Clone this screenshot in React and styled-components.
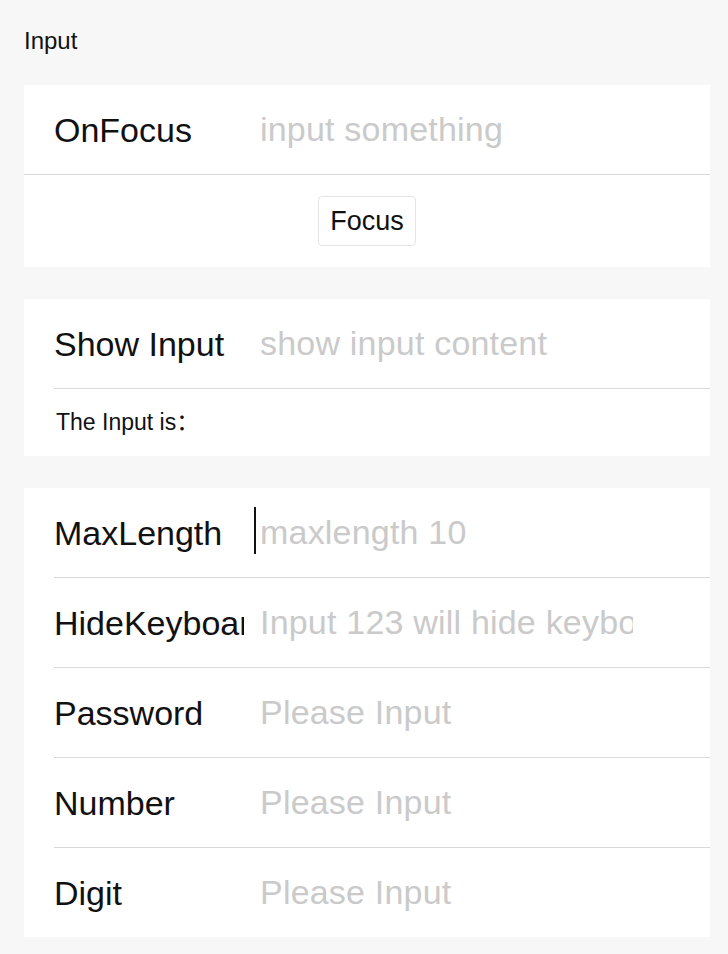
import React from "react";
import styled, { createGlobalStyle } from "styled-components";

const GlobalStyle = createGlobalStyle`
  html, body {
    margin: 0;
    padding: 0;
    background: #f7f7f7;
    font-family: "Liberation Sans", "Noto Sans CJK SC", Arial, sans-serif;
    color: #111;
  }
  * { box-sizing: border-box; }
`;

const Page = styled.div`
  padding: 29px 18px 18px 24px;
`;

const Title = styled.div`
  font-size: 24px;
  line-height: 24px;
  margin-bottom: 32px;
  color: #111;
`;

const Panel = styled.div`
  background: #fff;
  margin-bottom: 32px;
`;

const FieldRow = styled.div`
  display: flex;
  align-items: center;
  height: ${(p) => (p.$last ? "89px" : "90px")};
  border-bottom: ${(p) => (p.$last ? "none" : "1px solid #d9d9d9")};
  margin-left: ${(p) => (p.$inset ? "30px" : "0")};
  padding-left: ${(p) => (p.$inset ? "0" : "30px")};
  padding-right: 77px;
`;

const Label = styled.div`
  flex: 0 0 190px;
  width: 190px;
  margin-right: 16px;
  font-size: 34px;
  line-height: 40px;
  white-space: nowrap;
  overflow: hidden;
  color: #111;
`;

const InputWrap = styled.div`
  position: relative;
  flex: 1;
  min-width: 0;
  display: flex;
  align-items: center;
`;

const TextInput = styled.input`
  flex: 1;
  min-width: 0;
  width: 100%;
  height: 40px;
  border: none;
  outline: none;
  padding: 0;
  margin: 0;
  background: transparent;
  font-family: inherit;
  font-size: 34px;
  letter-spacing: 0.2px;
  color: #111;
  &::placeholder {
    color: #cacaca;
    opacity: 1;
  }
`;

const Caret = styled.span`
  position: absolute;
  left: -6px;
  top: calc(50% - 26px);
  width: 2px;
  height: 47px;
  background: #111;
`;

const ButtonRow = styled.div`
  display: flex;
  justify-content: center;
  padding: 21px 0;
`;

const FocusButton = styled.button`
  height: 50px;
  padding: 0 11px;
  border: 1px solid #e4e4e4;
  border-radius: 4px;
  background: #fff;
  font-family: inherit;
  font-size: 27px;
  color: #111;
  cursor: pointer;
`;

const ResultRow = styled.div`
  display: flex;
  align-items: center;
  height: 67px;
  margin-left: 30px;
  padding-left: 2px;
  padding-bottom: 1px;
  font-size: 23px;
  line-height: 28px;
  color: #111;
`;

const Field = ({ label, placeholder, inset, last, type = "text", caret, inputMode }) => (
  <FieldRow $inset={inset} $last={last}>
    <Label>{label}</Label>
    <InputWrap>
      {caret && <Caret />}
      <TextInput type={type} placeholder={placeholder} inputMode={inputMode} />
    </InputWrap>
  </FieldRow>
);

export default function App() {
  return (
    <>
      <GlobalStyle />
      <Page>
        <Title>Input</Title>

        <Panel>
          <Field label="OnFocus" placeholder="input something" />
          <ButtonRow>
            <FocusButton type="button">Focus</FocusButton>
          </ButtonRow>
        </Panel>

        <Panel>
          <Field label="Show Input" placeholder="show input content" inset />
          <ResultRow>The Input is：</ResultRow>
        </Panel>

        <Panel>
          <Field label="MaxLength" placeholder="maxlength 10" inset caret />
          <Field label="HideKeyboard" placeholder="Input 123 will hide keyboard" inset />
          <Field label="Password" placeholder="Please Input" inset type="password" />
          <Field label="Number" placeholder="Please Input" inset inputMode="numeric" />
          <Field label="Digit" placeholder="Please Input" inset last inputMode="decimal" />
        </Panel>
      </Page>
    </>
  );
}
